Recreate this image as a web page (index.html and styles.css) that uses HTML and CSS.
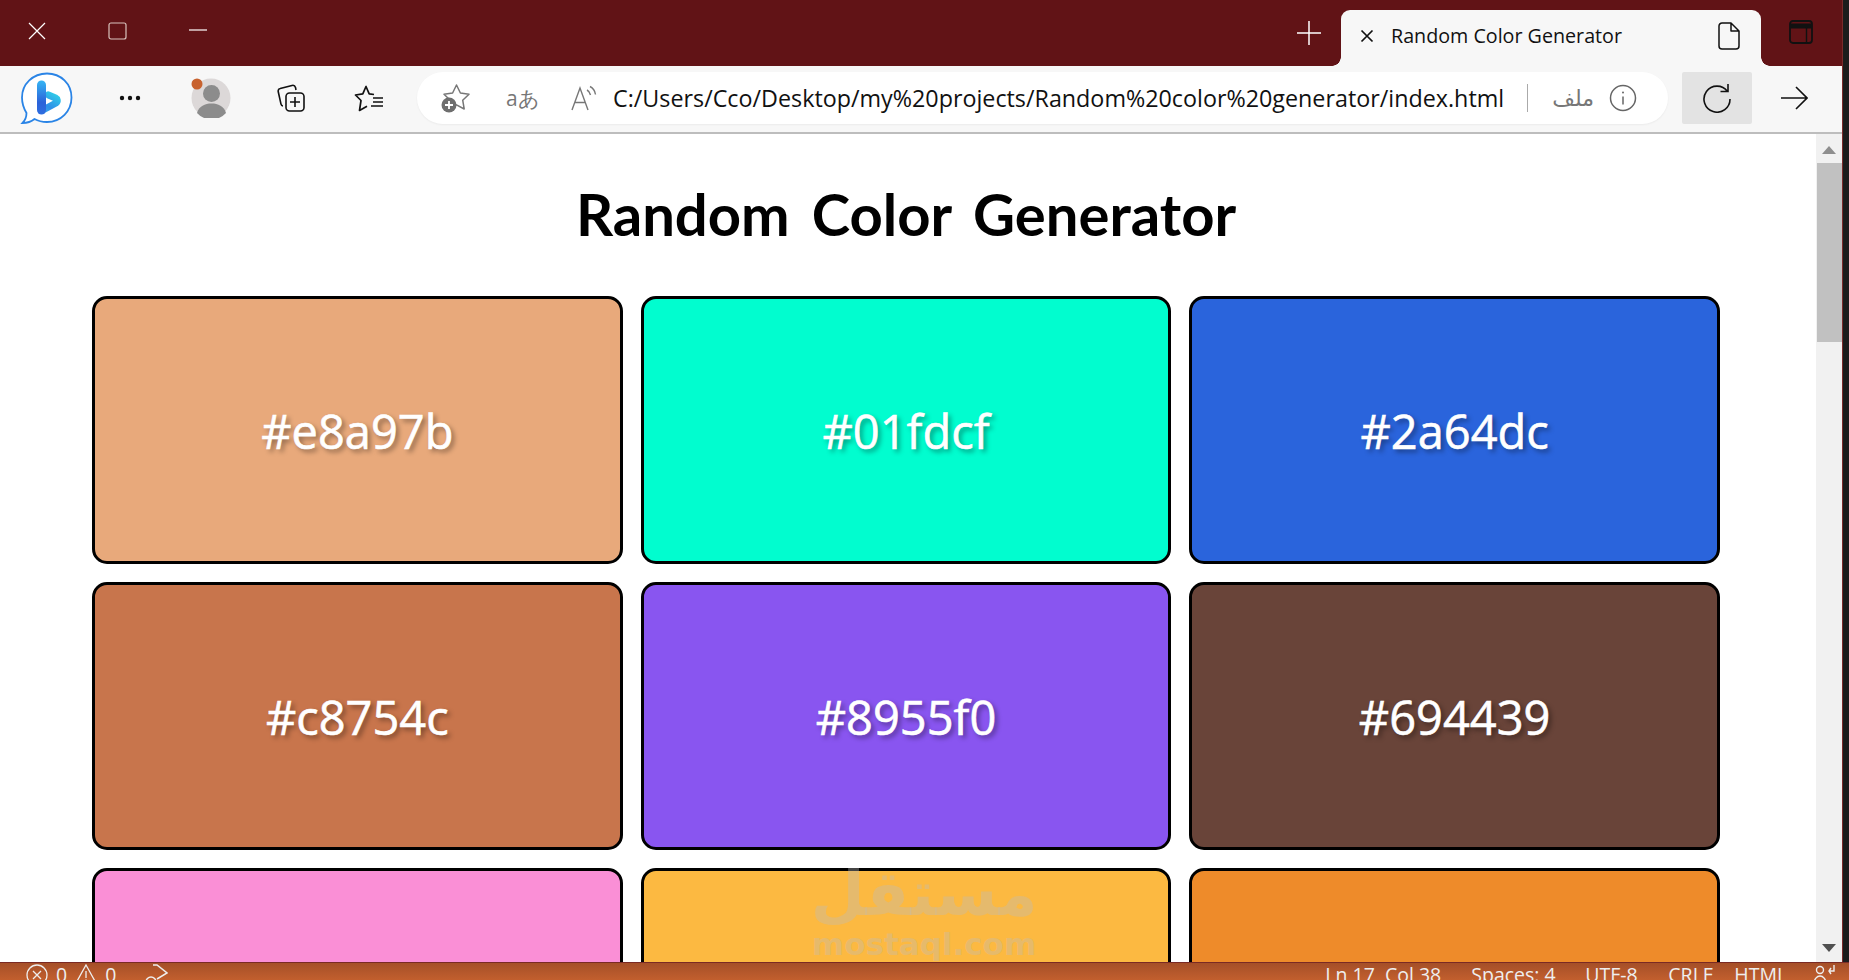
FILE: index.html
```html
<!DOCTYPE html>
<html lang="en">
<head>
    <meta charset="UTF-8">
    <meta name="viewport" content="width=device-width, initial-scale=1.0">
    <title>Random Color Generator</title>
    <link rel="stylesheet" href="styles.css">
</head>
<body>

<div class="window-row">
    <div class="window">

        <!-- Title bar, buttons on the left and the tab on the right -->
        <header class="titlebar">
            <svg class="win-close" width="18" height="18" viewBox="0 0 18 18"><path d="M1 1l16 16M17 1L1 17" stroke="#fff" stroke-width="1.2" fill="none"/></svg>
            <svg class="win-max" width="19" height="18" viewBox="0 0 19 18"><rect x="1" y="1" width="17" height="16" rx="2" stroke="#d9c3bd" stroke-width="1.2" fill="none"/></svg>
            <svg class="win-min" width="18" height="2" viewBox="0 0 18 2"><path d="M0 1h18" stroke="#fff" stroke-width="1.2"/></svg>
            <svg class="new-tab" width="26" height="26" viewBox="0 0 26 26"><path d="M13 1v24M1 13h24" stroke="#fff" stroke-width="1.5"/></svg>
            <div class="tab">
                <svg class="tab-close" width="14" height="14" viewBox="0 0 14 14"><path d="M1.5 1.5l11 11M12.5 1.5l-11 11" stroke="#111" stroke-width="1.7"/></svg>
                <span class="tab-title">Random Color Generator</span>
                <svg class="tab-page" width="22" height="28" viewBox="0 0 22 28"><path d="M4 1h9l8 8v15a3 3 0 0 1-3 3H4a3 3 0 0 1-3-3V4a3 3 0 0 1 3-3zM13 1v8h8" stroke="#111" stroke-width="1.5" fill="none" stroke-linejoin="round"/></svg>
            </div>
            <svg class="tab-layout" width="24" height="24" viewBox="0 0 24 24"><rect x="1" y="1" width="22" height="22" rx="3" stroke="#111" stroke-width="1.8" fill="none"/><path d="M1 6h22" stroke="#111" stroke-width="5"/><path d="M17.500 7v16" stroke="#111" stroke-width="1.4"/></svg>
        </header>

        <!-- Toolbar -->
        <nav class="toolbar">
            <svg class="tb-bing" width="53" height="53" viewBox="0 0 53 53" fill="none">
                <defs>
                    <linearGradient id="bingStem" gradientUnits="userSpaceOnUse" x1="21" y1="10" x2="21" y2="44"><stop offset="0" stop-color="#35b0f2"/><stop offset="0.6" stop-color="#2b62d9"/><stop offset="1" stop-color="#2f6fe0"/></linearGradient>
                    <linearGradient id="bingBowl" gradientUnits="userSpaceOnUse" x1="38" y1="20" x2="22" y2="44"><stop offset="0" stop-color="#2fd6e8"/><stop offset="0.6" stop-color="#2f8fe8"/><stop offset="1" stop-color="#3db0f0"/></linearGradient>
                </defs>
                <path d="M27 1.500C41 1.500 51.500 12 51.500 25.500S41 50 27 50c-5 0-9-1-12.500-3-3 2.500-7 4-12 4 2.500-2.500 4-6 4-10C3.500 36 2 31 2 25.500 2 12 13 1.500 27 1.500z" fill="#fff" stroke="#2a84e6" stroke-width="1.800"/>
                <path d="M23 38l13-7c2-1.500 1.500-4-.5-5l-7-3" stroke="url(#bingBowl)" stroke-width="7" stroke-linecap="round" stroke-linejoin="round"/>
                <path d="M21.500 13v25" stroke="url(#bingStem)" stroke-width="9" stroke-linecap="round"/>
            </svg>
            <svg class="tb-dots" width="22" height="6" viewBox="0 0 22 6"><circle cx="3" cy="3" r="2.200" fill="#111"/><circle cx="11" cy="3" r="2.200" fill="#111"/><circle cx="19" cy="3" r="2.200" fill="#111"/></svg>
            <svg class="tb-profile" width="40" height="40" viewBox="0 0 40 40">
                <circle cx="20" cy="20" r="19.500" fill="#dcd8d8"/>
                <circle cx="20.500" cy="15.500" r="8.500" fill="#8c8c8c"/>
                <path d="M6 35c2-7 8-9.500 14.500-9.500S33 28 35 35a19.500 19.500 0 0 1-29 0z" fill="#8c8c8c"/>
                <circle cx="6" cy="6" r="5.500" fill="#c8622e"/>
            </svg>
            <svg class="tb-collections" width="28" height="28" viewBox="0 0 28 28" fill="none" stroke="#111" stroke-width="1.600">
                <rect x="9" y="9" width="18" height="18" rx="3.500"/>
                <path d="M18 13v10M13 18h10"/>
                <path d="M6 22c-1 0-1.800-.8-2-1.800L1.200 7.500C1 6 1.800 4.800 3.200 4.500L15 1.400c1.600-.4 3 .4 3.500 2L19 6"/>
            </svg>
            <svg class="tb-favs" width="29" height="27" viewBox="0 0 29 27" fill="none" stroke="#111" stroke-width="1.700" stroke-linejoin="round">
                <path d="M20 9.500l-4.800-.7L12 1.500 8.800 8.800 1.500 10l5.500 5.500L5.500 25.500l7.500-4.200"/>
                <path d="M19 13h10M19 17h10M17 21h12"/>
            </svg>

            <div class="address">
                <svg class="addr-star" width="30" height="30" viewBox="0 0 30 30">
                    <path d="M15.500 2l3.900 8 8.600 1.200-6.300 6 1.500 8.800-7.700-4.200-7.700 4.200 1.500-8.800-6.300-6 8.600-1.200z" fill="none" stroke="#777" stroke-width="1.500" stroke-linejoin="round"/>
                    <circle cx="8" cy="22" r="7.500" fill="#6e6e6e"/>
                    <path d="M8 18v8M4 22h8" stroke="#fff" stroke-width="1.800"/>
                </svg>
                <span class="addr-translate">aあ</span>
                <svg class="addr-read" width="26" height="26" viewBox="0 0 26 26" fill="none" stroke="#777" stroke-width="1.400">
                    <path d="M1 25L9 3l8 22M4 17.500h10"/>
                    <path d="M16 5c2 1 3 3 3.500 5M19 1.500c3 1.500 5 4.500 5.500 8"/>
                </svg>
                <span class="addr-url">C:/Users/Cco/Desktop/my%20projects/Random%20color%20generator/index.html</span>
                <span class="addr-divider"></span>
                <span class="addr-file" lang="ar" dir="rtl">ملف</span>
                <svg class="addr-info" width="28" height="28" viewBox="0 0 28 28" fill="none" stroke="#666" stroke-width="1.500">
                    <circle cx="14" cy="14" r="12.500"/>
                    <path d="M14 12.500v8"/>
                    <circle cx="14" cy="8.500" r="1" fill="#666" stroke="none"/>
                </svg>
            </div>

            <div class="reload">
                <svg width="30" height="30" viewBox="0 0 30 30" fill="none" stroke="#111" stroke-width="1.600"><path d="M26 1v7.500h-7.500M25.500 8.500A13 13 0 1 0 28 16"/></svg>
            </div>
            <svg class="tb-forward" width="28" height="24" viewBox="0 0 28 24" fill="none" stroke="#111" stroke-width="1.600"><path d="M1 12h26M16 1l11 11-11 11"/></svg>
        </nav>

        <!-- The page itself and the scrollbar next to it -->
        <div class="viewport">
            <main class="page">
                <h1 class="heading">Random Color Generator</h1>
                <div class="grid">
                    <div class="card c1">#e8a97b</div>
                    <div class="card c2">#01fdcf</div>
                    <div class="card c3">#2a64dc</div>
                    <div class="card c4">#c8754c</div>
                    <div class="card c5">#8955f0</div>
                    <div class="card c6">#694439</div>
                    <div class="card c7"></div>
                    <div class="card c8"></div>
                    <div class="card c9"></div>
                </div>
                <div class="watermark">
                    <span class="wm-ar" lang="ar" dir="rtl">مستقل</span>
                    <span class="wm-en">mostaql.com</span>
                </div>
            </main>
            <div class="scrollbar">
                <span class="arrow-up"></span>
                <span class="thumb"></span>
                <span class="arrow-down"></span>
            </div>
        </div>
    </div>
    <div class="edge"></div>
</div>

<!-- Editor status bar, cut off by the bottom of the window -->
<footer class="statusbar">
    <svg class="st-error" width="22" height="22" viewBox="0 0 22 22" fill="none" stroke="#eee" stroke-width="1.300"><circle cx="11" cy="11" r="10"/><path d="M7 7l8 8M15 7l-8 8"/></svg>
    <span class="st-count">0</span>
    <svg class="st-warn" width="22" height="20" viewBox="0 0 22 20" fill="none" stroke="#eee" stroke-width="1.300"><path d="M11 1l10 18H1zM11 7v7M11 15.500v2"/></svg>
    <span class="st-count">0</span>
    <svg class="st-remote" width="24" height="22" viewBox="0 0 24 22" fill="none" stroke="#eee" stroke-width="1.500"><path d="M9 1h4l10 8-10 6M2 18a5 5 0 0 1 10 0v4H2zM2 17h10"/></svg>
    <span class="st-item st-pos">Ln 17, Col 38</span>
    <span class="st-item st-spaces">Spaces: 4</span>
    <span class="st-item st-enc">UTF-8</span>
    <span class="st-item st-eol">CRLF</span>
    <span class="st-item st-lang">HTML</span>
    <svg class="st-person" width="22" height="22" viewBox="0 0 22 22" fill="none" stroke="#eee" stroke-width="1.400"><circle cx="7" cy="6" r="3.500"/><path d="M1 20c0-5 3-8 6-8s6 3 6 8M21 1v6h-5M18 4l-2 3 2 3"/></svg>
</footer>

</body>
</html>
```

FILE: styles.css
```css
* {
    box-sizing: border-box;
}
html, body {
    height: 100%;
}
body {
    margin: 0;
    display: flex;
    flex-direction: column;
    overflow: hidden;
    background-color: #fff;
    font-family: "Open Sans", sans-serif;
    color: #111;
}
svg {
    display: block;
    flex-shrink: 0;
}

.window-row {
    flex: 1;
    display: flex;
    min-height: 0;
}
.window {
    flex: 1;
    display: flex;
    flex-direction: column;
    min-width: 0;
    border-right: 1px solid #7a2a2a;
}
.edge {
    width: 6px;
    background-color: #1c1c1c;
}

/* Title bar */
.titlebar {
    height: 66px;
    flex-shrink: 0;
    display: flex;
    align-items: center;
    background-color: #611316;
}
.win-close {
    margin: -4px 0 0 28px;
}
.win-max {
    margin: -4px 0 0 62px;
}
.win-min {
    margin: -6px 0 0 62px;
}
.new-tab {
    margin: -1px 0 0 1089px;
}
.tab {
    position: relative;
    align-self: flex-end;
    width: 420px;
    height: 56px;
    margin-left: 19px;
    padding: 0 21px 5px 19px;
    display: flex;
    align-items: center;
    background-color: #f7f7f7;
    border-radius: 9px 9px 0 0;
}
.tab::before,
.tab::after {
    content: "";
    position: absolute;
    bottom: 0;
    width: 9px;
    height: 9px;
}
.tab::before {
    left: -9px;
    background: radial-gradient(circle at 0 0, transparent 8.500px, #f7f7f7 9px);
}
.tab::after {
    right: -9px;
    background: radial-gradient(circle at 100% 0, transparent 8.500px, #f7f7f7 9px);
}
.tab-title {
    flex: 1;
    margin-left: 17px;
    font-size: 19.700px;
    white-space: nowrap;
}
.tab-layout {
    margin: -2px 0 0 28px;
}

/* Toolbar */
.toolbar {
    height: 68px;
    flex-shrink: 0;
    display: flex;
    align-items: center;
    padding-bottom: 2px;
    background-color: #f7f7f7;
    border-bottom: 2px solid #bdbdbd;
}
.tb-bing {
    margin-left: 20px;
}
.tb-dots {
    margin-left: 46px;
}
.tb-profile {
    margin-left: 50px;
}
.tb-collections {
    margin-left: 46px;
}
.tb-favs {
    margin-left: 49px;
}
.address {
    width: 1251px;
    height: 52px;
    margin-left: 34px;
    display: flex;
    align-items: center;
    background-color: #fff;
    border-radius: 26px;
    box-shadow: 0 1px 2px rgba(0,0,0,0.05);
}
.addr-star {
    margin-left: 24px;
}
.addr-translate {
    width: 30px;
    margin-left: 35px;
    font-size: 21px;
    color: #777;
    white-space: nowrap;
}
.addr-read {
    margin-left: 35px;
}
.addr-url {
    width: 890px;
    margin-left: 16px;
    font-size: 23.300px;
    color: #111;
    white-space: nowrap;
}
.addr-divider {
    width: 1px;
    height: 28px;
    margin-left: 24px;
    background-color: #aaa;
}
.addr-file {
    width: 45px;
    margin-left: 21px;
    font-family: "DejaVu Sans", sans-serif;
    font-size: 22px;
    color: #777;
}
.addr-info {
    margin-left: 15px;
}
.reload {
    width: 70px;
    height: 52px;
    margin-left: 14px;
    display: flex;
    align-items: center;
    justify-content: center;
    background-color: #e3e3e3;
    border-radius: 2px;
}
.tb-forward {
    margin-left: 28px;
}

/* Page */
.viewport {
    flex: 1;
    min-height: 0;
    display: flex;
}
.page {
    position: relative;
    flex: 1;
    min-width: 0;
    padding: 0 96px 0 92px;
    overflow: hidden;
    background-color: #fff;
    font-family: "Comic Sans MS", "Open Sans", sans-serif;
}
.heading {
    margin: 0;
    padding-top: 39px;
    height: 162px;
    font-family: "Comic Sans MS", Lato, sans-serif;
    font-size: 58px;
    line-height: 1.4;
    font-weight: 700;
    text-align: center;
    color: #000;
    word-spacing: 8px;
}
.grid {
    display: grid;
    grid-template-columns: repeat(3, 1fr);
    grid-auto-rows: 268px;
    gap: 18px;
}
.card {
    display: flex;
    align-items: center;
    justify-content: center;
    padding-top: 2px;
    border: 3px solid #000;
    border-radius: 15px;
    font-size: 47px;
    font-weight: 500;
    color: #fff;
    -webkit-text-stroke: 0.6px #fff;
    text-shadow: 3px 3px 5px rgba(0,0,0,0.4);
}
.c1 { background-color: #e8a97b; }
.c2 { background-color: #01fdcf; }
.c3 { background-color: #2a64dc; }
.c4 { background-color: #c8754c; }
.c5 { background-color: #8955f0; }
.c6 { background-color: #694439; }
.c7 { background-color: #fa8fd6; }
.c8 { background-color: #fcb941; }
.c9 { background-color: #ee8b2a; }

/* Site watermark, sits over the cards */
.watermark {
    position: absolute;
    left: 812px;
    top: 726px;
    width: 224px;
    display: flex;
    flex-direction: column;
    align-items: center;
    font-family: "DejaVu Sans", sans-serif;
    font-weight: 700;
    color: rgba(188,188,188,0.36);
    white-space: nowrap;
}
.wm-ar {
    font-size: 62px;
    line-height: 68px;
}
.wm-en {
    font-size: 31px;
    line-height: 32px;
}

/* Scrollbar */
.scrollbar {
    width: 26px;
    flex-shrink: 0;
    position: relative;
    display: flex;
    flex-direction: column;
    align-items: center;
    background-color: #f1f1f1;
}
.arrow-up,
.arrow-down {
    width: 0;
    height: 0;
    border-left: 7px solid transparent;
    border-right: 7px solid transparent;
}
.arrow-up {
    margin-top: 12px;
    border-bottom: 8px solid #8e8e8e;
}
.thumb {
    width: 25px;
    height: 179px;
    margin: 9px 0 0 1px;
    background-color: #c1c1c1;
}
.arrow-down {
    margin-top: auto;
    margin-bottom: 10px;
    border-top: 8px solid #505050;
}

/* Status bar */
.statusbar {
    height: 18px;
    flex-shrink: 0;
    display: flex;
    align-items: flex-start;
    overflow: hidden;
    padding-top: 1px;
    background: linear-gradient(#a54f28, #c25f2e);
    border-top: 1px solid #7a2a24;
    font-size: 19.500px;
    line-height: 22px;
    color: #eee;
}
.st-error {
    margin-left: 26px;
}
.st-warn {
    margin-left: 8px;
}
.st-count {
    margin-left: 8px;
}
.st-remote {
    margin-left: 28px;
}
.st-item {
    white-space: nowrap;
}
.st-pos {
    margin-left: 1157px;
    width: 117px;
}
.st-spaces {
    margin-left: 29px;
    width: 85px;
}
.st-enc {
    margin-left: 29px;
    width: 54px;
}
.st-eol {
    margin-left: 29px;
    width: 44px;
}
.st-lang {
    margin-left: 22px;
    width: 52px;
}
.st-person {
    margin-left: 27px;
}
```
